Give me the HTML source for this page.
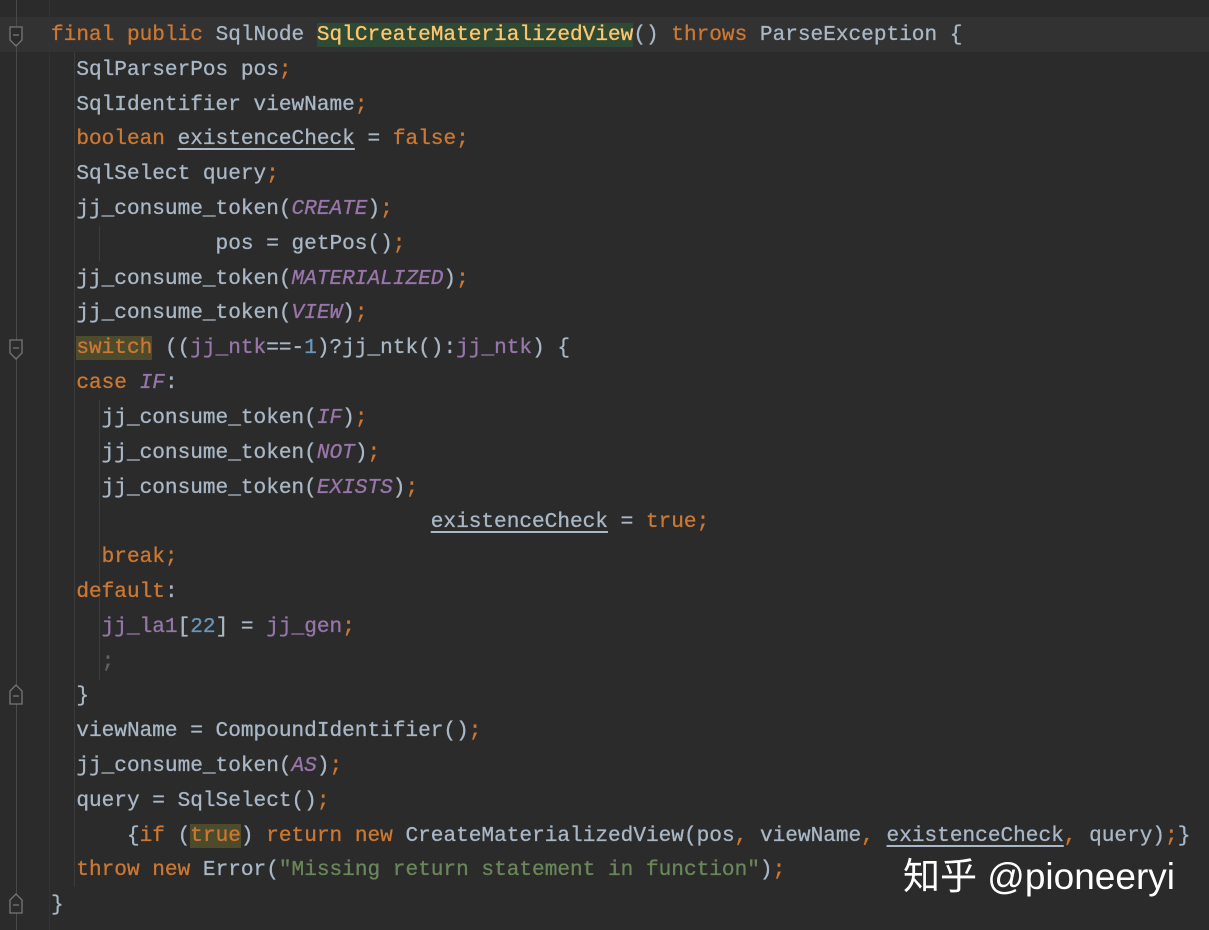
<!DOCTYPE html>
<html><head><meta charset="utf-8"><style>
body{margin:0;width:1209px;height:930px;background:#2b2b2b;overflow:hidden;position:relative}
.c{position:absolute;left:0;top:6px;width:1209px;height:924px}
.l{position:absolute;left:51px;height:35px;line-height:35px;font:21.1px "Liberation Mono",monospace;color:#a9b7c6;white-space:pre;-webkit-text-stroke:0.3px currentColor}
.k{color:#cc7832}.p{color:#9876aa}.pi{color:#9876aa;font-style:italic}.n{color:#6897bb}.s{color:#6a8759}.m{color:#ffc66d;background:#2e4a35}
.u{text-decoration:underline;text-underline-offset:4px}.h{background:#4e4a2c}
.g{position:absolute;top:0;width:1px;background:#3c3c3c}
.wm{position:absolute;left:903px;top:846px;font:37px "Liberation Sans","Noto Sans CJK SC",sans-serif;color:#fff;white-space:nowrap}
</style></head><body>
<div style="position:absolute;left:0;top:17px;width:1209px;height:35px;background:#323232"></div>
<div class="g" style="left:16px;height:930px;background:#4a4a4a"></div>
<div class="g" style="left:49px;height:930px;background:#333"></div>
<div class="g" style="left:74px;top:52px;height:835px"></div>
<div class="g" style="left:99px;top:226px;height:35px"></div>
<div class="g" style="left:99px;top:400px;height:280px"></div>
<svg style="position:absolute;left:8px;top:26px" width="16" height="22"><path d="M2 1h12v13l-6 6-6-6z" fill="#2b2b2b" stroke="#777" stroke-width="1.3"/><path d="M5 9h6" stroke="#777" stroke-width="1.3"/></svg>
<svg style="position:absolute;left:8px;top:339px" width="16" height="22"><path d="M2 1h12v13l-6 6-6-6z" fill="#2b2b2b" stroke="#777" stroke-width="1.3"/><path d="M5 9h6" stroke="#777" stroke-width="1.3"/></svg>
<svg style="position:absolute;left:8px;top:683px" width="16" height="22"><path d="M2 21h12V8L8 2 2 8z" fill="#2b2b2b" stroke="#777" stroke-width="1.3"/><path d="M5 13h6" stroke="#777" stroke-width="1.3"/></svg>
<svg style="position:absolute;left:8px;top:892px" width="16" height="22"><path d="M2 21h12V8L8 2 2 8z" fill="#2b2b2b" stroke="#777" stroke-width="1.3"/><path d="M5 13h6" stroke="#777" stroke-width="1.3"/></svg>
<div class="c">
<div class="l" style="top:17px"><span class="k">final public </span>SqlNode <span class="m">SqlCreateMaterializedView</span>() <span class="k">throws </span>ParseException {</div>
<div class="l" style="top:52px">  SqlParserPos pos<span class="k">;</span></div>
<div class="l" style="top:87px">  SqlIdentifier viewName<span class="k">;</span></div>
<div class="l" style="top:121px">  <span class="k">boolean </span><span class="u">existenceCheck</span> = <span class="k">false;</span></div>
<div class="l" style="top:156px">  SqlSelect query<span class="k">;</span></div>
<div class="l" style="top:191px">  jj_consume_token(<span class="pi">CREATE</span>)<span class="k">;</span></div>
<div class="l" style="top:226px">             pos = getPos()<span class="k">;</span></div>
<div class="l" style="top:261px">  jj_consume_token(<span class="pi">MATERIALIZED</span>)<span class="k">;</span></div>
<div class="l" style="top:295px">  jj_consume_token(<span class="pi">VIEW</span>)<span class="k">;</span></div>
<div class="l" style="top:330px">  <span class="k h">switch</span> ((<span class="p">jj_ntk</span>==-<span class="n">1</span>)?jj_ntk():<span class="p">jj_ntk</span>) {</div>
<div class="l" style="top:365px">  <span class="k">case </span><span class="pi">IF</span>:</div>
<div class="l" style="top:400px">    jj_consume_token(<span class="pi">IF</span>)<span class="k">;</span></div>
<div class="l" style="top:435px">    jj_consume_token(<span class="pi">NOT</span>)<span class="k">;</span></div>
<div class="l" style="top:470px">    jj_consume_token(<span class="pi">EXISTS</span>)<span class="k">;</span></div>
<div class="l" style="top:504px">                              <span class="u">existenceCheck</span> = <span class="k">true;</span></div>
<div class="l" style="top:539px">    <span class="k">break;</span></div>
<div class="l" style="top:574px">  <span class="k">default</span>:</div>
<div class="l" style="top:609px">    <span class="p">jj_la1</span>[<span class="n">22</span>] = <span class="p">jj_gen</span><span class="k">;</span></div>
<div class="l" style="top:644px">    <span style="color:#606366">;</span></div>
<div class="l" style="top:678px">  }</div>
<div class="l" style="top:713px">  viewName = CompoundIdentifier()<span class="k">;</span></div>
<div class="l" style="top:748px">  jj_consume_token(<span class="pi">AS</span>)<span class="k">;</span></div>
<div class="l" style="top:783px">  query = SqlSelect()<span class="k">;</span></div>
<div class="l" style="top:818px">      {<span class="k">if </span>(<span class="k h">true</span>) <span class="k">return new </span>CreateMaterializedView(pos<span class="k">, </span>viewName<span class="k">, </span><span class="u">existenceCheck</span><span class="k">, </span>query)<span class="k">;</span>}</div>
<div class="l" style="top:852px">  <span class="k">throw new </span>Error(<span class="s">"Missing return statement in function"</span>)<span class="k">;</span></div>
<div class="l" style="top:887px">}</div>
</div>
<div class="wm">知乎 @pioneeryi</div>
</body></html>
